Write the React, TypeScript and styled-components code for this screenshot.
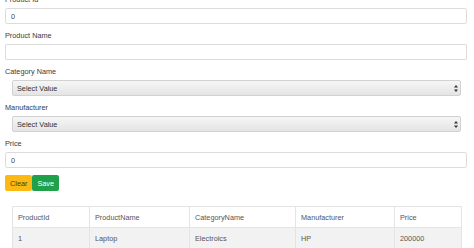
import React, { ReactElement, useState } from 'react'
import styled, { createGlobalStyle } from 'styled-components'

const GlobalStyle = createGlobalStyle`
  body {
    margin: 0;
    background: #fff;
    font-family: "Liberation Sans", Arial, sans-serif;
    color: #333;
  }
`

type Product = {
  id: number
  name: string
  category: string
  manufacturer: string
  price: number
}

const products: Product[] = [
  { id: 1, name: 'Laptop', category: 'Electroics', manufacturer: 'HP', price: 200000 }
]

const columns = [
  { title: 'ProductId', width: 77 },
  { title: 'ProductName', width: 100 },
  { title: 'CategoryName', width: 106 },
  { title: 'Manufacturer', width: 99 },
  { title: 'Price', width: 67 }
]

function SelectField({ options }: { options: string[] }): ReactElement {
  return (
    <SelectWrap>
      <Select defaultValue="">
        <option value="">Select Value</option>
        {options.map((o) => (
          <option key={o} value={o}>{o}</option>
        ))}
      </Select>
      <Arrows width="4" height="7" viewBox="0 0 4 7">
        <path d="M2 0 L4 2.6 L0 2.6 Z" fill="#333" />
        <path d="M2 7 L4 4.4 L0 4.4 Z" fill="#333" />
      </Arrows>
    </SelectWrap>
  )
}

export default function App(): ReactElement {
  const [id, setId] = useState('0')
  const [name, setName] = useState('')
  const [price, setPrice] = useState('0')

  const clear = () => {
    setId('0')
    setName('')
    setPrice('0')
  }

  return (
    <>
      <GlobalStyle />
      <Page>
        <Group>
          <Label>Product Id</Label>
          <Input value={id} onChange={(e) => setId(e.target.value)} />
        </Group>
        <Group>
          <Label>Product Name</Label>
          <Input value={name} onChange={(e) => setName(e.target.value)} />
        </Group>
        <Group>
          <Label>Category Name</Label>
          <SelectField options={['Electroics', 'Food']} />
        </Group>
        <Group>
          <Label>Manufacturer</Label>
          <SelectField options={['HP', 'Dell']} />
        </Group>
        <Group>
          <Label>Price</Label>
          <Input value={price} onChange={(e) => setPrice(e.target.value)} />
        </Group>
        <Buttons>
          <Button kind="warning" onClick={clear}>Clear</Button>
          <Button kind="success">Save</Button>
        </Buttons>
        <Table>
          <thead>
            <tr>
              {columns.map((c) => (
                <Th key={c.title} width={c.width}>{c.title}</Th>
              ))}
            </tr>
          </thead>
          <tbody>
            {products.map((p) => (
              <Row key={p.id}>
                <Td>{p.id}</Td>
                <Td>{p.name}</Td>
                <Td>{p.category}</Td>
                <Td>{p.manufacturer}</Td>
                <Td>{p.price}</Td>
              </Row>
            ))}
          </tbody>
        </Table>
      </Page>
    </>
  )
}

const Page = styled.div`
  margin-top: -5px;
  padding: 0 7px 0 5px;
`

const Group = styled.div`
  margin-bottom: 7px;
`

const Label = styled.label`
  display: block;
  font-size: 7.3px;
  line-height: 9px;
  margin-bottom: 4px;
  color: #3a3a3a;
`

const Input = styled.input`
  display: block;
  box-sizing: border-box;
  width: 100%;
  height: 16px;
  padding: 0 5px;
  border: 1px solid #dcdcdc;
  border-radius: 2px;
  font-family: inherit;
  font-size: 7.3px;
  color: #444;
  outline: none;
`

const SelectWrap = styled.div`
  position: relative;
  margin: 0 6px 0 7px;
`

const Select = styled.select`
  display: block;
  box-sizing: border-box;
  width: 100%;
  height: 16px;
  padding: 0 4px;
  appearance: none;
  border: 1px solid #d2d2d2;
  border-radius: 2px;
  background: linear-gradient(#f6f6f6, #e4e4e4);
  font-family: inherit;
  font-size: 7.3px;
  color: #333;
  outline: none;
`

const Arrows = styled.svg`
  position: absolute;
  right: 3px;
  top: 4.5px;
  pointer-events: none;
`

const Buttons = styled.div`
  display: flex;
  margin-bottom: 15px;
`

const Button = styled.button<{ kind: 'warning' | 'success' }>`
  height: 16px;
  padding: 0 5px;
  border: none;
  border-radius: 2px;
  font-family: inherit;
  font-size: 7.3px;
  background: ${(p) => (p.kind === 'warning' ? '#fdb913' : '#20a04a')};
  color: ${(p) => (p.kind === 'warning' ? '#4a3a10' : '#fff')};
  cursor: pointer;
`

const Table = styled.table`
  border-collapse: collapse;
  margin-left: 7px;
  width: 449px;
  table-layout: fixed;
  font-size: 7.3px;
  color: #555;
`

const Th = styled.th<{ width: number }>`
  box-sizing: border-box;
  width: ${(p) => p.width}px;
  height: 21px;
  padding: 0 5px;
  text-align: left;
  font-weight: normal;
  border: 1px solid #e4e4e4;
`

const Row = styled.tr`
  background: #f2f2f2;
`

const Td = styled.td`
  box-sizing: border-box;
  height: 21px;
  padding: 0 5px;
  border: 1px solid #e4e4e4;
`
